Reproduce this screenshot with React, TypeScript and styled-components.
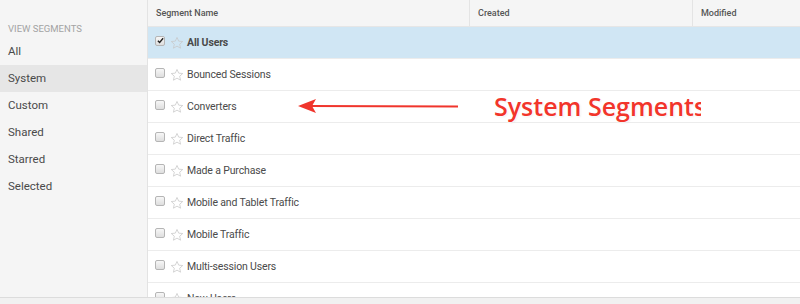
import React from 'react';
import styled, { createGlobalStyle } from 'styled-components';

const GlobalStyle = createGlobalStyle`
  html, body {
    margin: 0;
    padding: 0;
    background: #ffffff;
  }
  body {
    font-family: Roboto, "Liberation Sans", Arial, sans-serif;
    width: 800px;
    height: 304px;
    overflow: hidden;
  }
`;

const Page = styled.div`
  position: relative;
  width: 800px;
  height: 304px;
  display: flex;
  flex-direction: column;
  overflow: hidden;
`;

const Body = styled.div`
  display: flex;
  height: 297px;
  overflow: hidden;
  border-bottom: 1px solid #dcdcdc;
`;

const Footer = styled.div`
  flex: 1;
  background: #f1f1f1;
`;

const Sidebar = styled.div`
  width: 147px;
  flex-shrink: 0;
  background: #f5f5f5;
  border-right: 1px solid #e3e3e3;
  padding-top: 21px;
`;

const SideTitle = styled.div`
  font-size: 9.5px;
  color: #a3a3a3;
  padding: 0 8px;
  height: 15px;
  line-height: 15px;
  margin-bottom: 2px;
`;

const SideItem = styled.div<{ $active?: boolean }>`
  height: 27px;
  line-height: 27px;
  padding: 0 8px;
  font-size: 11.5px;
  color: #4a4a4a;
  background: ${(p) => (p.$active ? '#e6e6e6' : 'transparent')};
`;

const Table = styled.div`
  flex: 1;
  display: flex;
  flex-direction: column;
`;

const HeaderRow = styled.div`
  display: grid;
  grid-template-columns: 321px 223px 1fr;
  height: 26px;
  flex-shrink: 0;
  background: #f5f5f5;
  border-bottom: 1px solid #e6e6e6;
`;

const HeaderCell = styled.div<{ $divider?: boolean }>`
  font-size: 9px;
  font-weight: 500;
  color: #555;
  line-height: 26px;
  padding-left: 8px;
  border-left: ${(p) => (p.$divider ? '1px solid #e4e4e4' : 'none')};
`;

const Row = styled.div<{ $selected?: boolean }>`
  display: flex;
  align-items: center;
  flex-shrink: 0;
  height: 31px;
  padding-left: 7px;
  border-bottom: 1px solid #ececec;
  background: ${(p) => (p.$selected ? '#d0e6f4' : '#ffffff')};
`;

const Check = styled.span`
  width: 8px;
  height: 8px;
  border: 1px solid #b5b5b5;
  border-radius: 2px;
  background: linear-gradient(#f7f7f7, #dedede);
  margin-top: -4px;
  display: flex;
  align-items: center;
  justify-content: center;
`;

const StarIcon = styled.svg`
  width: 14px;
  height: 14px;
  margin-left: 5px;
  margin-right: 3px;
`;

const Name = styled.span<{ $bold?: boolean }>`
  font-size: 10.5px;
  letter-spacing: -0.15px;
  color: #4a4a4a;
  font-weight: ${(p) => (p.$bold ? 700 : 400)};
`;

const Annotation = styled.div`
  position: absolute;
  left: 297px;
  top: 87px;
  width: 404px;
  height: 38px;
  display: flex;
  align-items: center;
  overflow: hidden;
`;

const Arrow = styled.svg`
  width: 163px;
  height: 16px;
  flex-shrink: 0;
`;

const Callout = styled.span`
  margin-left: 34px;
  font-family: "Open Sans", "Noto Sans", sans-serif;
  font-size: 25px;
  font-weight: 600;
  color: #f2352b;
  white-space: nowrap;
  text-shadow: 0 0 2px #fff, 0 0 2px #fff, 0 0 3px #fff, 1px 1px 2px rgba(0, 0, 0, 0.08);
`;

const Star = () => (
  <StarIcon viewBox="0 0 24 24">
    <path
      d="M12 2.5l2.9 6.3 6.9.7-5.2 4.6 1.5 6.8L12 17.4l-6.1 3.5 1.5-6.8-5.2-4.6 6.9-.7z"
      fill="none"
      stroke="#c8c8c8"
      strokeWidth="1.3"
      strokeLinejoin="round"
    />
  </StarIcon>
);

const segments = [
  'All Users',
  'Bounced Sessions',
  'Converters',
  'Direct Traffic',
  'Made a Purchase',
  'Mobile and Tablet Traffic',
  'Mobile Traffic',
  'Multi-session Users',
  'New Users',
];

const views = ['All', 'System', 'Custom', 'Shared', 'Starred', 'Selected'];

const App = () => {
  return (
    <Page>
      <GlobalStyle />
      <Body>
        <Sidebar>
          <SideTitle>VIEW SEGMENTS</SideTitle>
          {views.map((v) => (
            <SideItem key={v} $active={v === 'System'}>
              {v}
            </SideItem>
          ))}
        </Sidebar>
        <Table>
          <HeaderRow>
            <HeaderCell>Segment Name</HeaderCell>
            <HeaderCell $divider>Created</HeaderCell>
            <HeaderCell $divider>Modified</HeaderCell>
          </HeaderRow>
          {segments.map((s, i) => (
            <Row key={s} $selected={i === 0}>
              <Check>
                {i === 0 && (
                  <svg width="7" height="7" viewBox="0 0 8 8">
                    <path d="M1 4.2l2 2L7 1.5" fill="none" stroke="#222" strokeWidth="1.6" />
                  </svg>
                )}
              </Check>
              <Star />
              <Name $bold={i === 0}>{s}</Name>
            </Row>
          ))}
        </Table>
      </Body>
      <Footer />
      <Annotation>
        <Arrow viewBox="0 0 163 16">
          <line x1="12" y1="8" x2="161" y2="8.5" stroke="#f0352c" strokeWidth="2" />
          <path d="M1 8 L19 1 L15 8 L19 15 Z" fill="#f0352c" />
        </Arrow>
        <Callout>System Segments</Callout>
      </Annotation>
    </Page>
  );
};

export default App;
